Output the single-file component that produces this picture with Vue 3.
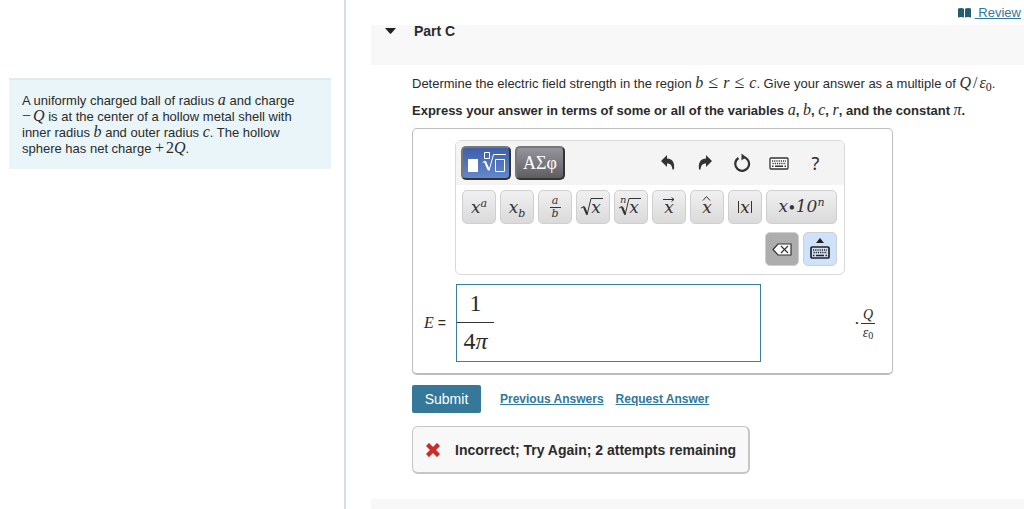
<script setup>
import { ref } from 'vue'

const open = ref(true)
</script>

<template>
  <div class="page">
    <aside class="side">
      <p class="intro">
        A uniformly charged ball of radius <i class="m">a</i> and charge<br />
        <span class="m"><span class="sign">−</span><i>Q</i></span> is at the center of a hollow metal shell with<br />
        inner radius <i class="m">b</i> and outer radius <i class="m">c</i>. The hollow<br />
        sphere has net charge <span class="m"><span class="sign">+</span>2<i>Q</i></span>.
      </p>
    </aside>

    <main class="main">
      <div class="top">
        <a class="review" href="#review">
          <svg width="13" height="10" viewBox="0 0 13 10" aria-hidden="true">
            <path d="M0 .5Q3.500-.5 6 .8V9.500Q3 8.500 0 9.500ZM13 .5Q9.500-.5 7 .8V9.500Q10 8.500 13 9.500Z" fill="#245c73" />
          </svg>
          <span class="review-text">&nbsp;Review</span>
        </a>
      </div>

      <header class="part">
        <button class="toggle" type="button" :aria-expanded="open" @click="open = !open">
          <svg width="11" height="6" viewBox="0 0 11 6" aria-hidden="true"><path d="M0 0H11L6.200 5.500Q5.500 6.200 4.800 5.500Z" fill="#222" /></svg>
          <span>Part C</span>
        </button>
      </header>

      <section v-show="open" class="body">
        <p class="question">
          Determine the electric field strength in the region
          <span class="m"><i>b</i><span class="op">≤</span><i>r</i><span class="op">≤</span><i>c</i></span>. Give your answer as a multiple of
          <span class="m"><i>Q</i><span class="slash">/</span><i>ε</i><small>0</small></span>.
        </p>
        <p class="question strong">
          Express your answer in terms of some or all of the variables <i class="m">a</i>, <i class="m">b</i>,
          <i class="m">c</i>, <i class="m">r</i>, and the constant <i class="m">π</i>.
        </p>

        <div class="answer">
          <div class="editor">
            <div class="modes">
              <button class="mode active" type="button" aria-label="Templates">
                <svg width="42" height="26" viewBox="0 0 42 26" fill="none" stroke="#fff">
                  <path d="M3 9H13V22H3Z" fill="#fff" stroke="none" />
                  <path d="M19.500 2.500H24.500V8.500H19.500ZM30.500 9.500H39.500V21.500H30.500Z" />
                  <path d="M17.500 12.500L20 11L24 20.500L28.500 4.500H41" />
                  <path d="M20 11.500L23.500 19.500" stroke-width="2" />
                </svg>
              </button>
              <button class="mode greek" type="button">ΑΣφ</button>
              <div class="tools">
                <button type="button" aria-label="Undo">
                  <svg width="16" height="18" viewBox="0 0 16 18"><path d="M1 7L7 1V4.500C12 4.500 15 8 14 15.500H12.500C12 11.500 10.500 9.500 7 9.500V13Z" fill="#333" /></svg>
                </button>
                <button type="button" aria-label="Redo">
                  <svg width="16" height="18" viewBox="0 0 16 18"><path d="M15 7L9 1V4.500C4 4.500 1 8 2 15.500H3.500C4 11.500 5.500 9.500 9 9.500V13Z" fill="#333" /></svg>
                </button>
                <button type="button" aria-label="Reset">
                  <svg width="18" height="20" viewBox="0 0 18 20"><path d="M10 4A6.900 6.900 0 1 1 5.500 5" fill="none" stroke="#333" stroke-width="2.200" /><path d="M8.500 .5L13 4L8.500 7.500Z" fill="#333" /></svg>
                </button>
                <button type="button" aria-label="Keyboard shortcuts">
                  <svg width="20" height="13" viewBox="0 0 20 13"><rect x="1" y="1" width="18" height="11" rx="1" fill="#fff" stroke="#333" stroke-width="1.300" /><path d="M3 4H17M3.500 6.500H17" stroke="#333" stroke-width="1.500" stroke-dasharray="1.200 1" /><path d="M3 9.300H4.500M6 9.300H14M15.500 9.300H17" stroke="#333" stroke-width="1.500" /></svg>
                </button>
                <button class="help" type="button" aria-label="Help">?</button>
              </div>
            </div>

            <div class="keys">
              <button class="key" type="button"><span>x<sup>a</sup></span></button>
              <button class="key" type="button"><span>x<sub>b</sub></span></button>
              <button class="key" type="button"><span class="frac small"><span>a</span><span>b</span></span></button>
              <button class="key" type="button" aria-label="Square root">
                <svg class="over" width="34" height="32" viewBox="0 0 34 32" fill="none" stroke="#333"><path d="M5 17L8 15.500L11 24L15 7.500H27" /><path d="M8 16L11 23" stroke-width="2" /></svg>
                <span class="root">x</span>
              </button>
              <button class="key" type="button" aria-label="Nth root">
                <svg class="over" width="34" height="32" viewBox="0 0 34 32" fill="none" stroke="#333"><path d="M5 17L8 15.500L11 24L15 7.500H27" /><path d="M8 16L11 23" stroke-width="2" /></svg>
                <span class="index">n</span>
                <span class="root">x</span>
              </button>
              <button class="key" type="button" aria-label="Vector">
                <svg class="over" width="34" height="32" viewBox="0 0 34 32" fill="none" stroke="#333"><path d="M11 8.500H22M19.500 6.500L22 8.500L19.500 10.500" /></svg>
                <span>x</span>
              </button>
              <button class="key" type="button" aria-label="Unit vector">
                <svg class="over" width="34" height="32" viewBox="0 0 34 32" fill="none" stroke="#333"><path d="M13 9.500L16.500 5.500L20 9.500" /></svg>
                <span>x</span>
              </button>
              <button class="key" type="button"><span class="abs">x</span></button>
              <button class="key wide" type="button"><span>x<b>•</b>10<sup>n</sup></span></button>
            </div>
            <div class="keys end">
              <button class="key delete" type="button" aria-label="Backspace">
                <svg width="20" height="13" viewBox="0 0 20 13"><path d="M1 6.500L6 1H19V12H6Z" fill="#fff" stroke="#333" stroke-width="1.200" /><path d="M9 3L16 10M16 3L9 10" stroke="#333" stroke-width="1.200" /></svg>
              </button>
              <button class="key show" type="button" aria-label="Show keyboard">
                <svg width="20" height="22" viewBox="0 0 20 22"><path d="M6 5L10 0L14 5Z" fill="#222" /><rect x="1" y="9" width="18" height="11" rx="1" fill="none" stroke="#222" stroke-width="1.700" /><path d="M3 12H17M3.500 14.500H17" stroke="#222" stroke-width="1.500" stroke-dasharray="1.200 1" /><path d="M3 17.500H4.500M6 17.500H14M15.500 17.500H17" stroke="#222" stroke-width="1.500" /></svg>
              </button>
            </div>
          </div>

          <div class="entry">
            <span id="lhs" class="lhs"><i>E</i> =</span>
            <div class="field" role="textbox" aria-labelledby="lhs" contenteditable="true" spellcheck="false">
              <span class="frac big"><span>1</span><span>4<i>π</i></span></span>
            </div>
            <span class="unit">
              <b>·</b>
              <span class="frac tiny"><i>Q</i><span><i>ε</i><small>0</small></span></span>
            </span>
          </div>
        </div>

        <div class="actions">
          <button class="submit" type="button">Submit</button>
          <a href="#previous">Previous Answers</a>
          <a href="#request">Request Answer</a>
        </div>

        <div class="feedback" role="status">
          <svg width="14" height="14" viewBox="0 0 14 14" aria-hidden="true"><path d="M3 3L11 11M11 3L3 11" stroke="#cf2a2a" stroke-width="4.400" stroke-linecap="square" stroke-linejoin="round" /></svg>
          <span>Incorrect; Try Again; 2 attempts remaining</span>
        </div>
      </section>

      <footer class="next"></footer>
    </main>
  </div>
</template>

<style>
body {
  background: #fff;
  overflow: hidden;
}
</style>

<style scoped>
.page {
  display: flex;
  min-height: 100vh;
  color: #2b2b2b;
  font-family: "Liberation Sans", Arial, sans-serif;
  font-size: 13px;
  line-height: 16px;
}
button {
  font: inherit;
  color: inherit;
  padding: 0;
  border: 0;
  background: none;
  cursor: pointer;
}
svg { display: block; flex: none; }
p { margin: 0; }
.m {
  font-family: "Liberation Serif", serif;
  font-size: 16px;
  font-weight: 400;
  line-height: 0;
}
.m small { font-size: 12px; vertical-align: -3px; }
.sign { margin-right: 2px; }
.op { margin: 0 5px; font-size: 18px; }
.slash { margin: 0 2px; }

.side {
  flex: none;
  width: 322px;
  padding: 78px 13px 0 9px;
  border-right: 2px solid #d3e0ea;
}
.intro {
  padding: 13px 13px 12px;
  border-top: 2px solid #e3eaec;
  background: #e9f5f8;
  white-space: nowrap;
}

.main {
  flex: 1;
  min-width: 0;
  display: flex;
  flex-direction: column;
  padding-left: 25px;
}
.top {
  display: flex;
  justify-content: flex-end;
  height: 25px;
  padding-right: 3px;
}
.review {
  display: flex;
  align-items: center;
  gap: 4px;
  color: #31789b;
  text-decoration: none;
}
.review-text { text-decoration: underline; }
.part {
  height: 40px;
  background: #f8f8f8;
}
.toggle {
  display: flex;
  align-items: center;
  gap: 18px;
  padding: 0 0 0 14px;
  font-size: 14px;
  font-weight: 700;
  line-height: 12px;
}
.body { padding: 11px 0 0 41px; }
.question { white-space: nowrap; }
.question + .question { margin-top: 11px; }
.strong { font-weight: 700; }

.answer {
  box-sizing: border-box;
  max-width: 481px;
  margin-top: 9px;
  padding: 11px;
  border: 1px solid #bdbdbd;
  border-bottom-width: 2px;
  border-radius: 5px;
}
.editor {
  margin: 0 36px 0 31px;
  border: 1px solid #d9d9d9;
  border-radius: 6px;
  overflow: hidden;
  padding-bottom: 8px;
}
.modes {
  display: flex;
  gap: 4px;
  padding: 5px;
  background: #f4f4f4;
}
.mode {
  box-sizing: border-box;
  display: flex;
  align-items: center;
  justify-content: center;
  width: 50px;
  height: 34px;
  border: 2px solid #333;
  border-top-color: #777;
  border-left-color: #777;
  border-radius: 5px;
}
.active { background: linear-gradient(#3c5fa8, #6488cb); }
.greek {
  background: linear-gradient(#96949c, #5e5e60);
  color: #fff;
  font-family: "Liberation Serif", serif;
  font-size: 18px;
}
.tools {
  flex: 1;
  display: flex;
  align-items: center;
  justify-content: flex-end;
  padding-right: 5px;
}
.tools button {
  display: flex;
  justify-content: center;
  width: 37px;
}
.tools .help { font: 18px/20px "Noto Sans", sans-serif; }
.keys {
  display: flex;
  gap: 4px;
  padding: 5px 7px 0 6px;
}
.end { justify-content: flex-end; padding-top: 8px; }
.key {
  position: relative;
  box-sizing: border-box;
  flex: none;
  display: flex;
  align-items: center;
  justify-content: center;
  width: 34px;
  height: 34px;
  border: 1px solid #cfcfcf;
  border-radius: 5px;
  background: linear-gradient(#f0f0f0, #dadada);
  color: #333;
  font-family: "DejaVu Serif", serif;
  font-size: 17px;
  font-style: italic;
  line-height: 18px;
}
.key sup, .key sub { font-size: 11px; line-height: 0; }
.key sup { vertical-align: 6px; }
.key sub { vertical-align: -4px; }
.over { position: absolute; left: -1px; top: 0; }
.root { padding-left: 6px; }
.index { position: absolute; left: 5px; top: 0; font-size: 10px; }
.abs { border: solid #333; border-width: 0 1px; padding: 0 1px; line-height: 12px; }
.wide { flex: 1; }
.wide b { font-size: 12px; }
.delete { background: #adadad; }
.show { background: #cfe2fb; }

.frac {
  display: inline-flex;
  flex-direction: column;
  align-items: center;
}
.frac > :first-child { border-bottom: 1px solid #333; align-self: stretch; text-align: center; }
.small { width: 11px; font-size: 11px; line-height: 12px; }

.entry {
  display: flex;
  align-items: center;
  margin-top: 9px;
}
.lhs {
  flex: none;
  width: 32px;
  font-size: 14px;
}
.lhs i { font-family: "Liberation Serif", serif; font-size: 16px; }
.field {
  box-sizing: border-box;
  flex: 1;
  height: 78px;
  border: 1px solid #3a7f9f;
  outline-offset: 1px;
}
.big {
  width: 37px;
  font-family: "Liberation Serif", serif;
  font-size: 24px;
  line-height: 37px;
}
.unit {
  flex: none;
  display: flex;
  align-items: center;
  gap: 2px;
  margin: 0 6px 0 94px;
  font-family: "Liberation Serif", serif;
}
.tiny { width: 14px; font-size: 14px; line-height: 17px; }
.tiny small { font-size: 10px; vertical-align: -2px; line-height: 0; }

.actions {
  display: flex;
  align-items: center;
  gap: 12px;
  margin-top: 10px;
  font-size: 12px;
  font-weight: 700;
}
.actions a { color: #31789b; }
.submit {
  width: 69px;
  height: 28px;
  margin-right: 7px;
  border-radius: 2px;
  background: #35789a;
  color: #fff;
  font-size: 14px;
  font-weight: 400;
}
.feedback {
  box-sizing: border-box;
  display: flex;
  align-items: center;
  gap: 15px;
  width: fit-content;
  height: 48px;
  margin-top: 13px;
  padding: 0 12px 0 13px;
  border: 1px solid #c6c6c6;
  border-right-width: 2px;
  border-bottom-width: 2px;
  border-radius: 6px;
  background: #f8f8f8;
  font-size: 14px;
  font-weight: 700;
}
.next {
  flex: 1;
  margin-top: 25px;
  background: #f8f8f8;
}
</style>
